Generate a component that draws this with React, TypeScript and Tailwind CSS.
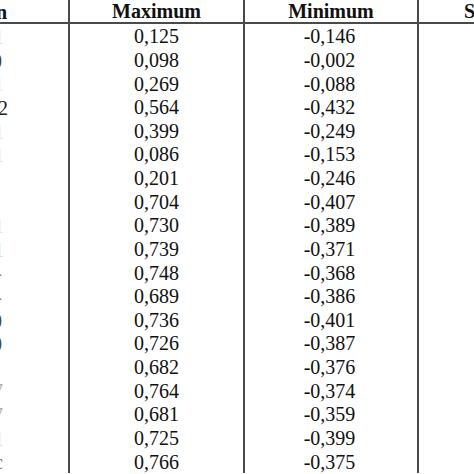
import React from "react";

const rows: { label: string; lc: string; off: string; max: string; min: string }[] = [
  { label: "1", lc: "text-[#ddd]", off: "right-[64px]", max: "0,125", min: "-0,146" },
  { label: "0", lc: "text-[#444]", off: "right-[66px]", max: "0,098", min: "-0,002" },
  { label: "1", lc: "text-[#e5e5e5]", off: "right-[64px]", max: "0,269", min: "-0,088" },
  { label: "2", lc: "text-[#222]", off: "right-[60px]", max: "0,564", min: "-0,432" },
  { label: "1", lc: "text-[#ddd]", off: "right-[64px]", max: "0,399", min: "-0,249" },
  { label: "1", lc: "text-[#ddd]", off: "right-[64px]", max: "0,086", min: "-0,153" },
  { label: "", lc: "text-[#ddd]", off: "right-[64px]", max: "0,201", min: "-0,246" },
  { label: "", lc: "text-[#ddd]", off: "right-[64px]", max: "0,704", min: "-0,407" },
  { label: "1", lc: "text-[#ddd]", off: "right-[64px]", max: "0,730", min: "-0,389" },
  { label: "1", lc: "text-[#d5d5d5]", off: "right-[64px]", max: "0,739", min: "-0,371" },
  { label: "-", lc: "text-[#888]", off: "right-[66px]", max: "0,748", min: "-0,368" },
  { label: "-", lc: "text-[#888]", off: "right-[66px]", max: "0,689", min: "-0,386" },
  { label: "0", lc: "text-[#444]", off: "right-[66px]", max: "0,736", min: "-0,401" },
  { label: "0", lc: "text-[#444]", off: "right-[66px]", max: "0,726", min: "-0,387" },
  { label: "", lc: "text-[#ddd]", off: "right-[64px]", max: "0,682", min: "-0,376" },
  { label: "7", lc: "text-[#aaa]", off: "right-[65px]", max: "0,764", min: "-0,374" },
  { label: "7", lc: "text-[#aaa]", off: "right-[65px]", max: "0,681", min: "-0,359" },
  { label: "1", lc: "text-[#ddd]", off: "right-[64px]", max: "0,725", min: "-0,399" },
  { label: "c", lc: "text-[#777]", off: "right-[65px]", max: "0,766", min: "-0,375" },
];

function Cells({ c1, c2, c3, c4, head }: { c1: React.ReactNode; c2: React.ReactNode; c3: React.ReactNode; c4: React.ReactNode; head?: boolean }) {
  return (
    <div className={`flex ${head ? "h-[22px]" : "h-[23.64px]"}`}>
      <div className="w-[68px] shrink-0 overflow-hidden relative">{c1}</div>
      <div className="w-[2px] shrink-0 self-stretch bg-[#4a4a4a]" />
      <div className={`w-[173px] shrink-0 flex items-center justify-center ${head ? "font-bold pb-[1px]" : "pt-[1px]"}`}>{c2}</div>
      <div className="w-[2px] shrink-0 self-stretch bg-[#4a4a4a]" />
      <div className={`w-[172px] shrink-0 flex items-center justify-center ${head ? "font-bold pb-[1px]" : "pt-[1px] pr-[3px]"}`}>{c3}</div>
      <div className="w-[2px] shrink-0 self-stretch bg-[#4a4a4a]" />
      <div className="flex-1 flex items-center pl-[45px] font-bold whitespace-nowrap pb-[1px]">{c4}</div>
    </div>
  );
}

export default function App() {
  return (
    <div
      className="w-[474px] h-[474px] overflow-hidden bg-white text-[#111] text-[20px] leading-none"
      style={{ fontFamily: '"Liberation Serif", "Times New Roman", serif' }}
    >
      <Cells
        head
        c1={<span className="absolute right-[61px] top-[2px] font-bold whitespace-nowrap">Station</span>}
        c2="Maximum"
        c3="Minimum"
        c4="Standard deviation"
      />
      <div className="h-[2px] w-full bg-[#4a4a4a]" />
      {rows.map((r, i) => (
        <Cells
          key={i}
          c1={<span className={`absolute ${r.off} top-[3px] whitespace-nowrap ${r.lc}`}>{r.label}</span>}
          c2={r.max}
          c3={r.min}
          c4=""
        />
      ))}
    </div>
  );
}
